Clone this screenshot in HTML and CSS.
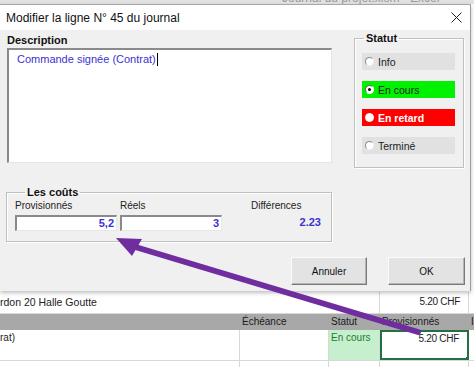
FILE: index.html
```html
<!DOCTYPE html>
<html lang="fr">
<head>
<meta charset="utf-8">
<title>Modifier la ligne</title>
<link rel="stylesheet" href="styles.css">
</head>
<body>
<div class="screen">
  <div class="app-strip"><span class="app-title">Journal du projet.xlsm - Excel</span></div>
  <div class="dialog">
    <div class="titlebar">
      <span class="title">Modifier la ligne N° 45 du journal</span>
      <svg class="close" width="11" height="11" viewBox="0 0 11 11"><path d="M0.5 0.5 L10.5 10.5 M10.5 0.5 L0.5 10.5" stroke="#222" stroke-width="1" fill="none"/></svg>
    </div>
    <div class="body">
      <div class="top-row">
        <div class="desc-col">
          <div class="label-bold">Description</div>
          <div class="textarea"><span class="desc-text">Commande signée (Contrat)</span><span class="caret"></span></div>
        </div>
        <fieldset class="frame statut">
          <legend>Statut</legend>
          <div class="opt opt-info"><span class="radio"></span>Info</div>
          <div class="opt opt-cours"><span class="radio checked"></span>En cours</div>
          <div class="opt opt-retard"><span class="radio white"></span>En retard</div>
          <div class="opt opt-termine"><span class="radio"></span>Terminé</div>
        </fieldset>
      </div>
      <fieldset class="frame couts">
        <legend>Les coûts</legend>
        <div class="cost-col">
          <div class="lbl">Provisionnés</div>
          <div class="input">5,2</div>
        </div>
        <div class="cost-col">
          <div class="lbl">Réels</div>
          <div class="input">3</div>
        </div>
        <div class="diff-col">
          <div class="lbl">Différences</div>
          <div class="diff-val">2.23</div>
        </div>
      </fieldset>
      <div class="buttons">
        <div class="btn btn-cancel">Annuler</div>
        <div class="btn btn-ok">OK</div>
      </div>
    </div>
  </div>
  <div class="sheet">
    <div class="row r1">
      <div class="c cA3">rdon 20 Halle Goutte</div>
      <div class="c cD num">5.20 CHF</div>
    </div>
    <div class="row rh">
      <div class="c cA"></div>
      <div class="c cB">Échéance</div>
      <div class="c cC">Statut</div>
      <div class="c cD">Provisionnés</div>
      <div class="c cE">I</div>
    </div>
    <div class="row rd">
      <div class="c cA">rat)</div>
      <div class="c cB"></div>
      <div class="c cC green">En cours</div>
      <div class="c cD num sel">5.20 CHF<span class="handle"></span></div>
      <div class="c cE"></div>
    </div>
    <div class="row r4">
      <div class="c cA"></div>
      <div class="c cB"></div>
      <div class="c cC"></div>
      <div class="c cD"></div>
      <div class="c cE"></div>
    </div>
  </div>
  <svg class="arrow" width="474" height="367" viewBox="0 0 474 367">
    <line x1="418" y1="332" x2="132" y2="246" stroke="#6f2da0" stroke-width="6" stroke-linecap="round"/>
    <polygon points="116,238 142,239 132,256" fill="#6f2da0"/>
  </svg>
</div>
</body>
</html>
```

FILE: styles.css
```css
* { box-sizing: border-box; }
html, body { margin: 0; padding: 0; background: #fff; }
.screen {
  position: relative;
  width: 474px;
  height: 367px;
  overflow: hidden;
  background: #fff;
  font-family: "Liberation Sans", Arial, sans-serif;
}
.app-strip {
  height: 4px;
  background: #e2e2e2;
  overflow: hidden;
  padding-left: 282px;
}
.app-title {
  display: block;
  margin-top: -8px;
  font-size: 12px;
  line-height: 12px;
  color: #9a9a9a;
}
.dialog {
  width: 471px;
  height: 287px;
  border-right: 1px solid #9c9c9c;
  border-top: 1px solid #a8a8a8;
  background: #f0f0f0;
  box-shadow: 0 2px 4px rgba(0,0,0,0.25);
  position: relative;
}
.titlebar {
  height: 25px;
  background: #fff;
  display: flex;
  align-items: center;
  justify-content: space-between;
  padding: 0 8px 0 6px;
}
.title { font-size: 12px; color: #111; }
.close { display: block; }
.body { padding: 4px 5px 0 7px; }
.top-row { display: flex; align-items: flex-start; }
.desc-col { width: 325px; }
.label-bold { font-size: 11px; font-weight: bold; line-height: 13px; color: #111; }
.textarea {
  margin-top: 1px;
  height: 115px;
  background: #fff;
  border-style: solid;
  border-width: 2px 1px 1px 2px;
  border-color: #8a8a8a #e6e6e6 #e6e6e6 #8a8a8a;
  padding: 3px 0 0 8px;
  font-size: 11px;
  color: #3a32d0;
  display: flex;
  align-items: flex-start;
}
.caret { display: inline-block; width: 1px; height: 13px; background: #000; margin-left: 1px; }
.frame {
  margin: 0;
  border: 1px solid #c0c0c0;
  box-shadow: inset 1px 1px 0 #fff, 1px 1px 0 #fff;
  padding: 0;
}
.frame legend {
  font-size: 11px;
  font-weight: bold;
  color: #111;
  padding: 0 2px;
  line-height: 12px;
}
.statut {
  margin-left: 22px;
  margin-top: -2px;
  width: 110px;
  height: 136px;
  padding: 9px 0 0 7px;
}
.statut legend { margin-left: 2px; }
.opt {
  width: 93px;
  height: 17px;
  margin-bottom: 11px;
  display: flex;
  align-items: center;
  font-size: 10.5px;
  color: #222;
  padding-left: 3px;
}
.opt-info, .opt-termine { background: #e1e1e1; }
.opt-cours { background: #00f200; }
.opt-retard { background: #ff0000; color: #fff; font-weight: bold; }
.radio {
  width: 9px;
  height: 9px;
  border-radius: 50%;
  background: #fff;
  border: 1px solid #8c8c8c;
  border-right-color: #f0f0f0;
  border-bottom-color: #f0f0f0;
  margin-right: 4px;
  position: relative;
}
.radio.checked { border-color: #666 #fff #fff #666; }
.radio.checked::after {
  content: "";
  position: absolute;
  left: 2px; top: 2px;
  width: 3px; height: 3px;
  border-radius: 50%;
  background: #000;
}
.radio.white { border-color: #fff; }
.couts {
  margin: 18px 0 0 -1px;
  width: 326px;
  height: 56px;
  display: flex;
  padding: 0 0 0 8px;
}
.couts legend { margin-left: 10px; }
.cost-col { width: 102px; margin-right: 3px; }
.lbl { font-size: 10px; color: #222; line-height: 12px; margin-top: 2px; }
.input {
  margin-top: 3px;
  height: 16px;
  background: #fff;
  border-style: solid;
  border-width: 2px 1px 1px 2px;
  border-color: #8a8a8a #e6e6e6 #e6e6e6 #8a8a8a;
  text-align: right;
  padding-right: 2px;
  font-size: 11px;
  font-weight: bold;
  line-height: 13px;
  color: #3a32d0;
}
.diff-col { margin-left: 26px; width: 70px; }
.diff-val {
  text-align: right;
  font-size: 11px;
  font-weight: bold;
  color: #3a32d0;
  margin-top: 4px;
  line-height: 13px;
}
.buttons {
  display: flex;
  justify-content: flex-end;
  gap: 21px;
  margin-top: 15px;
  padding-right: 0;
}
.btn {
  height: 28px;
  display: flex;
  align-items: center;
  justify-content: center;
  background: #e3e3e3;
  border: 1px solid;
  border-color: #fafafa #7a7a7a #7a7a7a #fafafa;
  box-shadow: inset -1px -1px 0 #b4b4b4;
  font-size: 10px;
  color: #111;
}
.btn-cancel { width: 76px; }
.btn-ok { width: 77px; }
.sheet {
  margin-top: 1px;
  font-family: "Liberation Sans", Arial, sans-serif;
  font-size: 10px;
  color: #222;
}
.row { display: flex; }
.c { flex: none; border-right: 1px solid #d8d8d8; padding: 0 2px; white-space: nowrap; overflow: hidden; }
.cA { width: 240px; padding-left: 0; }
.cA3 { width: 380px; padding-left: 0; }
.cB { width: 89px; }
.cC { width: 51px; }
.cD { width: 89px; }
.cE { width: 5px; border-right: none; }
.num { text-align: right; padding-right: 8px; letter-spacing: -0.3px; }
.r1 { height: 22px; align-items: center; border-bottom: 1px solid #d8d8d8; }
.r1 .c { height: 22px; line-height: 20px; }
.r1 .cA3 { border-right: 1px solid #d8d8d8; font-size: 10.5px; }
.rh { height: 16px; background: #a8a8a8; }
.rh .c { line-height: 16px; border-right-color: #a8a8a8; color: #1a1a1a; }
.rd { height: 31px; border-bottom: 1px solid #d8d8d8; }
.rd .c { height: 30px; line-height: 16px; }
.green { background: #c6efce; color: #1e7b32; }
.sel {
  position: relative;
  border: 2px solid #207245;
  line-height: 13px !important;
}
.handle {
  position: absolute;
  right: -3px; bottom: -3px;
  width: 5px; height: 5px;
  background: #207245;
  border: 1px solid #fff;
}
.r4 { height: 8px; }
.r4 .c { height: 8px; }
.arrow { position: absolute; left: 0; top: 0; pointer-events: none; }
```
